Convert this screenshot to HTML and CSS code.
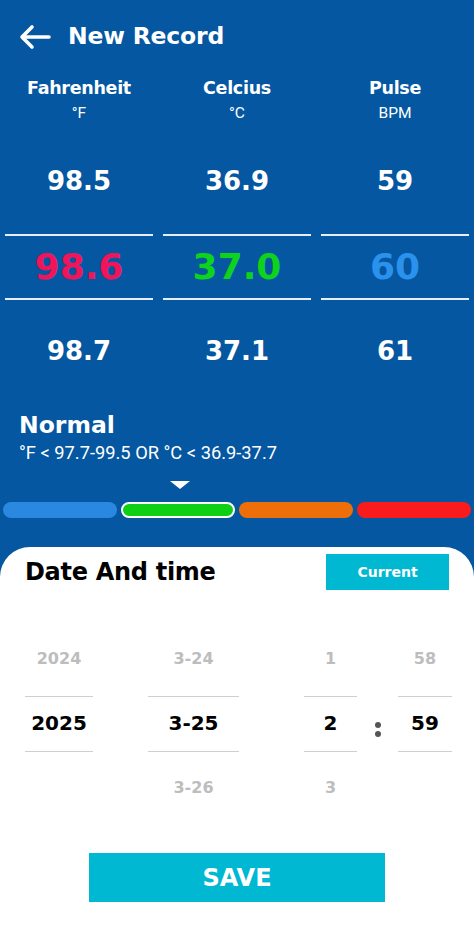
FILE: index.html
```html
<!DOCTYPE html>
<html>
<head>
<meta charset="utf-8">
<link rel="stylesheet" href="styles.css">
</head>
<body>
<div class="app">
  <div class="top">
    <div class="header">
      <svg class="back" width="34" height="26" viewBox="0 0 34 26"><path d="M31 13H5M14 3L4 13l10 10" fill="none" stroke="#fff" stroke-width="3.6" stroke-linecap="round" stroke-linejoin="round"/></svg>
      <span class="title">New Record</span>
    </div>
    <div class="cols">
      <div class="col">
        <div class="ch">Fahrenheit</div>
        <div class="cu">°F</div>
        <div class="v prev">98.5</div>
        <div class="sel red">98.6</div>
        <div class="v next">98.7</div>
      </div>
      <div class="col">
        <div class="ch">Celcius</div>
        <div class="cu">°C</div>
        <div class="v prev">36.9</div>
        <div class="sel green">37.0</div>
        <div class="v next">37.1</div>
      </div>
      <div class="col">
        <div class="ch">Pulse</div>
        <div class="cu">BPM</div>
        <div class="v prev">59</div>
        <div class="sel blue">60</div>
        <div class="v next">61</div>
      </div>
    </div>
    <div class="status">
      <div class="sname">Normal</div>
      <div class="srange">°F &lt; 97.7-99.5 OR °C &lt; 36.9-37.7</div>
    </div>
    <div class="scale">
      <div class="seg"></div>
      <div class="seg active"><span class="tri"></span></div>
      <div class="seg"></div>
      <div class="seg"></div>
    </div>
  </div>
  <div class="card">
    <div class="card-head">
      <span class="dt">Date And time</span>
      <button class="current">Current</button>
    </div>
    <div class="picker">
      <div class="pc year">
        <div class="pv">2024</div>
        <div class="ps">2025</div>
        <div class="pv after"></div>
      </div>
      <div class="pc date">
        <div class="pv">3-24</div>
        <div class="ps">3-25</div>
        <div class="pv after">3-26</div>
      </div>
      <div class="pc hour">
        <div class="pv">1</div>
        <div class="ps">2</div>
        <div class="pv after">3</div>
      </div>
      <div class="colon"><span></span><span></span></div>
      <div class="pc min">
        <div class="pv">58</div>
        <div class="ps">59</div>
        <div class="pv after"></div>
      </div>
    </div>
    <button class="save">SAVE</button>
  </div>
</div>
</body>
</html>
```
FILE: styles.css
```css
* { box-sizing: border-box; }
html, body { margin: 0; padding: 0; }
body {
  width: 474px;
  height: 927px;
  overflow: hidden;
  background: #0457a0;
  font-family: "DejaVu Sans", "Liberation Sans", sans-serif;
}
.app { display: flex; flex-direction: column; height: 927px; }
.top { background: #0457a0; color: #fff; padding: 0 3px; }
.header {
  display: flex; align-items: center;
  height: 72px; padding-left: 15px;
}
.back { margin-right: 16px; margin-top: 1px; }
.title { font-size: 23.5px; font-weight: bold; letter-spacing: -0.2px; }
.cols {
  display: grid; grid-template-columns: repeat(3, 148px);
  column-gap: 10px; padding: 0 2px;
}
.col { display: flex; flex-direction: column; align-items: center; }
.ch { font-size: 17.5px; font-weight: bold; height: 24px; line-height: 24px; margin-top: 4px; letter-spacing: -0.3px; }
.cu { font-size: 15.5px; height: 26px; line-height: 26px; font-family: "Roboto", sans-serif; }
.v {
  font-size: 26px; font-weight: bold; width: 100%; text-align: center;
}
.v.prev { height: 108px; line-height: 110px; }
.v.next { height: 106px; line-height: 102px; }
.sel {
  width: 100%; text-align: center; font-size: 36px; font-weight: bold;
  height: 66px; line-height: 62px;
  border-top: 2px solid #e6eef7; border-bottom: 2px solid #e6eef7;
}
.red { color: #f0145a; }
.green { color: #0ed21e; }
.blue { color: #2a92ec; }
.status { padding: 4px 16px 0; }
.sname { font-size: 23.5px; font-weight: bold; height: 30px; line-height: 30px; }
.srange { font-family: "Roboto", sans-serif; font-size: 18.3px; height: 26px; line-height: 26px; }
.scale {
  display: grid; grid-template-columns: repeat(4, 1fr); column-gap: 4px;
  margin-top: 36px; padding: 0 0 29px;
}
.seg { height: 16px; border-radius: 8px; background: #2a88e0; position: relative; }
.seg:nth-child(2) { background: #0ecf14; border: 2px solid #fff; }
.seg:nth-child(3) { background: #ee6e0a; }
.seg:nth-child(4) { background: #fa1c1c; }
.tri {
  position: absolute; left: 47px; top: -23px;
  width: 0; height: 0;
  border-left: 10px solid transparent; border-right: 10px solid transparent;
  border-top: 8px solid #fff;
}
.card {
  flex: 1; background: #fff; border-radius: 30px 30px 0 0;
  padding: 7px 22px 0 25px;
  display: flex; flex-direction: column;
}
.card-head { display: flex; align-items: center; justify-content: space-between; height: 36px; }
.dt { font-size: 24px; font-weight: bold; color: #000; letter-spacing: -0.3px; }
.current {
  width: 123px; height: 36px; border: none; background: #01b8d3; color: #fff;
  font-family: inherit; font-size: 14px; font-weight: bold; margin-right: 3px;
}
.picker { display: flex; margin-top: 52px; height: 164px; }
.pc { display: flex; flex-direction: column; align-items: center; flex-shrink: 0; }
.pv { font-size: 16px; font-weight: bold; color: #bdbdbd; height: 54px; line-height: 34px; width: 100%; text-align: center; }
.ps {
  font-size: 20px; font-weight: bold; color: #000; height: 56px; line-height: 52px;
  width: 100%; text-align: center;
  border-top: 1.5px solid #cfcfcf; border-bottom: 1.5px solid #cfcfcf;
}
.pv.after { line-height: 72px; }
.year { width: 68px; }
.date { width: 91px; margin-left: 55px; }
.hour { width: 53px; margin-left: 65px; }
.colon {
  width: 41px; flex-shrink: 0; display: flex; flex-direction: column; align-items: center;
  padding-top: 80px; gap: 3px;
}
.colon span { width: 6px; height: 6px; border-radius: 50%; background: #555; }
.min { width: 54px; }
.save {
  align-self: center; margin-top: 47px; margin-left: -3px;
  width: 296px; height: 49px; border: none; background: #01b8d3; color: #fff;
  font-family: inherit; font-size: 24px; font-weight: bold;
}
```
